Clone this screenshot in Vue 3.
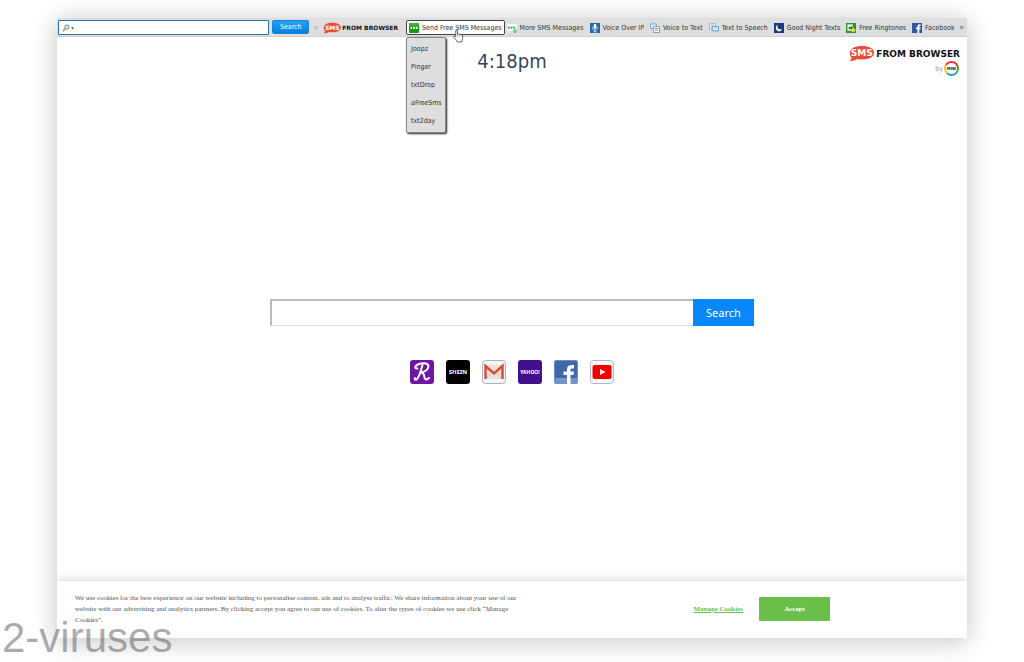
<script setup>
import { ref } from 'vue'

const toolbarQuery = ref('')
const query = ref('')
const services = ['Joopz', 'Pinger', 'txtDrop', 'aFreeSms', 'txt2day']
const tools = [
  { label: 'More SMS Messages', icon: 'more' },
  { label: 'Voice Over IP', icon: 'mic' },
  { label: 'Voice to Text', icon: 'vtt' },
  { label: 'Text to Speech', icon: 'tts' },
  { label: 'Good Night Texts', icon: 'moon' },
  { label: 'Free Ringtones', icon: 'ring' },
  { label: 'Facebook', icon: 'fb' },
]
</script>

<template>
  <div class="page">
    <div class="window">
      <header class="toolbar">
        <form class="bar-search" @submit.prevent>
          <label class="bar-field">
            <svg class="lens" viewBox="0 0 14 8" aria-hidden="true">
              <path d="M1 7.2 3.3 4.6" stroke="#c58a3a" stroke-width="1.5" />
              <circle cx="4.900" cy="3" r="2.1" fill="#d8ecfa" stroke="#62788e" stroke-width=".9" />
              <path d="M9 3.6h3l-1.500 1.700z" fill="#222" />
            </svg>
            <input v-model="toolbarQuery" type="text" aria-label="Toolbar search" />
          </label>
          <button class="bar-button" type="submit">Search</button>
        </form>
        <span class="chevron left">«</span>
        <a class="brand small" href="#" aria-label="SMS From Browser">
          <span class="bubble">
            <svg viewBox="0 0 25 17" aria-hidden="true"><path d="M13 1C20 1 25 3.500 25 7.800S20 14.500 13 14.500c-2 0-3.500-.1-5-.5-2 1.500-4.500 2-7.500 2 1.500-1 2-2 2-3.500C1 11.300.8 9.500.8 7.800.8 3.500 6 1 13 1Z" fill="#e94b35" /></svg>
            <b>SMS</b>
          </span>
          <strong>FROM BROWSER</strong>
        </a>
        <nav class="tools">
          <div class="dropdown">
            <button class="tool active" type="button" aria-expanded="true">
              <svg viewBox="0 0 11 11" aria-hidden="true"><rect width="11" height="11" rx="1" fill="#129b12" /><path d="M0 0h11v4H0z" fill="#35b52c" /><path d="M1.500 4.500h2v2h-2zM4.500 4.500h2v2h-2zM7.500 4.500h2v2h-2z" fill="#fff" /></svg>
              <span>Send Free SMS Messages</span>
            </button>
            <ul class="menu">
              <li v-for="s in services" :key="s"><a href="#">{{ s }}</a></li>
            </ul>
            <svg class="pointer" viewBox="0 0 12 15" aria-hidden="true">
              <path d="M3 8.500V2c0-1.500 2-1.500 2 0v3.500c.4-.8 1.700-.6 1.900.4.500-.7 1.600-.4 1.800.5.600-.5 1.800-.1 1.800 1V10c0 1.700-1 2.300-1 4H4.500C4.300 12 1.500 10.300.8 8.300.5 7 1.800 6.700 3 8.500Z" fill="#fff" stroke="#444" stroke-width=".9" />
              <path d="M5 5.500v3M6.900 6v2.500M8.700 6.500v2" stroke="#777" stroke-width=".5" />
            </svg>
          </div>
          <a v-for="t in tools" :key="t.icon" class="tool" href="#">
            <svg viewBox="0 0 11 11" aria-hidden="true">
              <template v-if="t.icon === 'more'">
                <rect y="1" width="11" height="8" rx="1" fill="#f5f8f5" /><path d="M1 4h2v2H1zM4 4h2v2H4zM7 4h2v2H7z" fill="#20a52c" /><circle cx="8.800" cy="8.800" r="2" fill="#35b644" /><path d="M7.800 8.800h2M8.800 7.800v2" stroke="#fff" stroke-width=".6" />
              </template>
              <template v-else-if="t.icon === 'mic'">
                <rect width="11" height="11" fill="#2766a7" /><rect x="4" y="1" width="3" height="5.500" rx="1.500" fill="#fff" /><path d="M2.500 4.500c0 4.500 6 4.500 6 0M5.500 8v2M3.500 9.700h4" fill="none" stroke="#dceaff" stroke-width=".9" />
              </template>
              <template v-else-if="t.icon === 'vtt'">
                <path d="M.5 1h6.500v4.500H3L1.500 7V5.500h-1z" fill="#d7edff" stroke="#4c94d1" stroke-width=".8" /><path d="M4 4h6.500v6.500H4z" fill="#fff" stroke="#777" stroke-width=".8" /><path d="M5.500 6h3.500M5.500 8h3.500" stroke="#555" stroke-width=".7" />
              </template>
              <template v-else-if="t.icon === 'tts'">
                <path d="M.5.800h6.500v5.700H.500z" fill="#fff" stroke="#8798ac" stroke-width=".8" /><path d="M2 2.500h3.500M2 4.500h2" stroke="#667" stroke-width=".6" /><path d="M3.500 4h7v4.500H9.300L9 10.200 7 8.500H3.500z" fill="#cde8ff" stroke="#428acb" stroke-width=".8" />
              </template>
              <template v-else-if="t.icon === 'moon'">
                <rect width="11" height="11" fill="#173a8d" /><path d="M4 2c-1 4 1.500 5.800 5 4.500C7.500 11 1.300 9.500 2 5c.2-1.500 1-2.500 2-3Z" fill="#fff0a2" />
              </template>
              <template v-else-if="t.icon === 'ring'">
                <rect width="11" height="11" fill="#2d9631" /><path d="M1.500 1.500h6v7h-6z" fill="#e3f4d8" /><path d="M3 4.500h2L7 3v5L5 6.500H3z" fill="#237a27" /><path d="m8 5 1 1.500 2 .3-1.300 1.500.3 2-2-1-2 1 .3-2L5 6.800l2-.3z" fill="#f4dd2c" />
              </template>
              <template v-else>
                <rect width="11" height="11" fill="#3156a0" /><path d="M6 11V7H4.500V5H6V4c0-2 1-2.700 3.500-2.500v1.800C8.300 3.200 8 3.500 8 4v1h1.500l-.3 2H8v4z" fill="#fff" />
              </template>
            </svg>
            <span>{{ t.label }}</span>
          </a>
        </nav>
        <span class="chevron right">»</span>
      </header>

      <main class="content">
        <div class="top">
          <time class="clock">4:18pm</time>
          <div class="identity">
            <a class="brand" href="#" aria-label="SMS From Browser">
              <span class="bubble">
                <svg viewBox="0 0 25 17" aria-hidden="true"><path d="M13 1C20 1 25 3.500 25 7.800S20 14.500 13 14.500c-2 0-3.500-.1-5-.5-2 1.500-4.500 2-7.500 2 1.500-1 2-2 2-3.500C1 11.300.8 9.500.8 7.800.8 3.500 6 1 13 1Z" fill="#e94b35" /></svg>
                <b>SMS</b>
              </span>
              <strong>FROM BROWSER</strong>
            </a>
            <div class="by">
              <span>by</span>
              <span class="ring"><b>MIW</b></span>
            </div>
          </div>
        </div>

        <form class="search" @submit.prevent>
          <input v-model="query" type="text" aria-label="Search the web" />
          <button type="submit">Search</button>
        </form>

        <nav class="shortcuts">
          <a href="#" aria-label="R">
            <svg viewBox="0 0 24 24"><rect width="24" height="24" rx="3" fill="#7016a2" /><path d="M7.500 8.500C3.500 9 5 4.500 11 3.500c6-1 8.500 1 7 4.500-1 2.500-4 4-7.500 4.500 2.500 0 3.500 1 3.800 4 .2 3 2 4 4.700 1.500M12.500 5C11 10 10 15 7.500 18.500c-1.500 2-3.500 1-2.500-.5" fill="none" stroke="#fff" stroke-width="2" stroke-linecap="round" /></svg>
          </a>
          <a class="shein" href="#"><span>SHEIN</span></a>
          <a href="#" aria-label="Gmail">
            <svg viewBox="0 0 24 24"><rect x=".5" y=".5" width="23" height="23" rx="3" fill="#f3f5f7" stroke="#a9b2ba" /><path d="M3 5h18v14H3z" fill="#e9e4d6" /><path d="m4 19 6-7M20 19l-6-7" stroke="#c9c3b5" stroke-width=".8" /><path d="M3.500 19V6l8.500 7.500L20.500 6v13" fill="none" stroke="#dc4539" stroke-width="2.400" /></svg>
          </a>
          <a class="yahoo" href="#"><span>YAHOO!</span></a>
          <a href="#" aria-label="Facebook">
            <svg viewBox="0 0 24 24"><rect width="24" height="24" rx="3" fill="#4167a8" /><path d="M0 18h24v3a3 3 0 0 1-3 3H3a3 3 0 0 1-3-3z" fill="#7396c8" /><path d="M.500 18V3A2.500 2.500 0 0 1 3 .500h18A2.500 2.500 0 0 1 23.500 3v15" fill="none" stroke="#6d8cc0" /><path d="M13 24v-9H9.500v-3.500H13V9c0-3.500 2.500-4.500 7-4v3.500c-2.500-.2-3.500 0-3.500 1.500v1.500H20l-.5 3.500h-3v9z" fill="#fff" /></svg>
          </a>
          <a href="#" aria-label="YouTube">
            <svg viewBox="0 0 24 24"><rect x=".5" y=".5" width="23" height="23" rx="3" fill="#f4f6f8" stroke="#b0b7bf" /><rect x="2.500" y="5" width="19" height="14" rx="2" fill="#f50000" /><path d="m10 9 5.500 3-5.500 3z" fill="#fff" /></svg>
          </a>
        </nav>
      </main>

      <footer class="cookies">
        <p>We use cookies for the best experience on our website including to personalise content, ads and to analyse traffic. We share information about your use of our<br />website with our advertising and analytics partners. By clicking accept you agree to our use of cookies. To alter the types of cookies we use click “Manage<br />Cookies”.</p>
        <a href="#">Manage Cookies</a>
        <button type="button">Accept</button>
      </footer>
    </div>
    <div class="watermark">2-viruses</div>
  </div>
</template>

<style>
body { background: #fff; }
</style>

<style scoped>
* { box-sizing: border-box; }
.page {
  position: relative;
  display: flex;
  min-height: 100vh;
  padding: 18px 57px 24px;
  overflow: hidden;
  font-family: "DejaVu Sans Condensed", "Noto Sans", sans-serif;
}
.window {
  display: flex;
  flex: 1;
  flex-direction: column;
  min-width: 0;
  background: #fff;
  box-shadow: 0 3px 24px rgba(0, 0, 0, .24);
}
a { color: inherit; text-decoration: none; }
button, input { font-family: inherit; }
.toolbar {
  display: flex;
  align-items: center;
  height: 19px;
  padding: 1px 3px 0 1px;
  background: #dedede;
  border-bottom: 1px solid #d0d0d0;
  color: #333;
  font-size: 7px;
  white-space: nowrap;
}
.bar-search { display: flex; flex: 1; gap: 3px; }
.bar-field {
  display: flex;
  flex: 1;
  align-items: center;
  height: 15px;
  padding-left: 3px;
  background: #fff;
  border: 1px solid #2672b5;
  border-radius: 1px;
}
.lens { width: 14px; height: 8px; }
.bar-field input { flex: 1; min-width: 0; height: 11px; padding: 0; border: 0; outline: 0; background: none; font-size: 7px; }
.bar-button {
  width: 37px;
  height: 14px;
  padding: 0;
  border: 1px solid #1583d6;
  border-radius: 2px;
  background: linear-gradient(#23a2f6, #0680e0);
  color: #fff;
  font-size: 7px;
  line-height: 12px;
}
.chevron { color: #555; font-size: 8px; }
.chevron.left { width: 14px; padding-left: 4px; color: #aaa; }
.chevron.right { margin-left: 5px; }
.brand { display: flex; align-items: center; gap: 1px; color: #111; font-family: "DejaVu Sans", sans-serif; white-space: nowrap; }
.brand strong { font-size: 9px; line-height: 12px; }
.bubble { display: grid; width: 27px; height: 17px; }
.bubble svg, .bubble b { grid-area: 1 / 1; }
.bubble svg { width: 100%; height: 100%; }
.bubble b { z-index: 1; color: #fff; font-size: 9px; line-height: 17px; text-align: center; }
.brand.small strong { font-size: 6px; line-height: 8px; }
.brand.small .bubble { width: 18px; height: 12px; }
.brand.small .bubble b { font-size: 6px; line-height: 12px; }
.tools { display: flex; align-items: center; gap: 6px; margin-left: 8px; }
.tool { display: flex; align-items: center; gap: 3px; line-height: 10px; }
.tool svg { flex: none; width: 10px; height: 10px; }
.dropdown { position: relative; margin-right: -4px; }
.tool.active {
  height: 15px;
  padding: 0 2px;
  background: #fff;
  border: 1px solid #444;
  border-radius: 2px;
  color: #333;
  font-size: 7px;
}
.menu {
  position: absolute;
  z-index: 2;
  top: 17px;
  left: 0;
  width: 40px;
  margin: 0;
  padding: 2px 0;
  list-style: none;
  background: #dedede;
  border: 1px solid #888;
  border-radius: 2px;
  box-shadow: 1px 1px 2px #222;
}
.menu a { display: block; padding-left: 4px; line-height: 18px; }
.pointer { position: absolute; z-index: 3; top: 9px; left: 47px; width: 11px; height: 14px; }
.content { display: flex; flex: 1; flex-direction: column; align-items: center; }
.top { display: grid; grid-template-columns: 1fr auto 1fr; width: 100%; padding: 8px 7px 0; }
.clock { grid-column: 2; padding-top: 4px; color: #34465c; font-size: 20px; line-height: 24px; }
.identity { justify-self: end; }
.by { display: flex; align-items: center; justify-content: flex-end; gap: 1px; padding-right: 1px; margin-top: -1px; color: #999; font-size: 7px; }
.ring {
  display: grid;
  place-items: center;
  width: 15px;
  height: 15px;
  border-radius: 50%;
  background: radial-gradient(circle, #fff 0 5px, transparent 6px), conic-gradient(#e33 0 20%, #36ad49 20% 38%, #1b9ee0 38% 62%, #f3c51c 62% 85%, #e33 85%);
}
.ring b { color: #111; font-size: 4px; line-height: 5px; }
.search { display: flex; width: 484px; max-width: 90%; height: 27px; margin-top: 223px; }
.search input { flex: 1; min-width: 0; padding: 0 8px; background: #fff; border: 1px solid #ddd; border-top: 2px solid #bbb; border-left: 2px solid #bbb; border-right: 0; outline: 0; font-size: 12px; }
.search button { width: 61px; padding: 0; border: 0; background: #0787fa; color: #fff; font-family: "Noto Sans", sans-serif; font-size: 11px; }
.shortcuts { display: flex; gap: 12px; margin-top: 34px; }
.shortcuts a { display: grid; place-items: center; width: 24px; height: 24px; border-radius: 3px; color: #fff; font-family: "Noto Sans", sans-serif; font-weight: 700; }
.shortcuts svg { width: 24px; height: 24px; }
.shortcuts .shein { background: #000; font-size: 6px; }
.shortcuts .yahoo { background: #42108d; font-size: 5px; }
.cookies {
  display: flex;
  align-items: center;
  min-height: 57px;
  padding: 0 137px 1px 18px;
  box-shadow: 0 0 10px rgba(0, 0, 0, .22);
  clip-path: inset(-12px 0 0);
  color: #555;
  font-family: "Liberation Serif", serif;
  font-size: 7px;
}
.cookies p { flex: 1; margin: 0; line-height: 11px; white-space: nowrap; }
.cookies a { color: #6abf4b; font-weight: 700; text-decoration: underline; }
.cookies button { width: 71px; height: 24px; margin-left: 16px; padding: 0; border: 0; border-radius: 1px; background: #6abf4b; color: #fff; font-family: "Liberation Serif", serif; font-size: 7px; font-weight: 700; }
.watermark {
  position: absolute;
  z-index: 4;
  bottom: 0;
  left: 2px;
  color: rgba(90, 90, 90, .5);
  font-family: "Liberation Sans", Arial, sans-serif;
  font-size: 42px;
  line-height: 48px;
  pointer-events: none;
}
</style>
